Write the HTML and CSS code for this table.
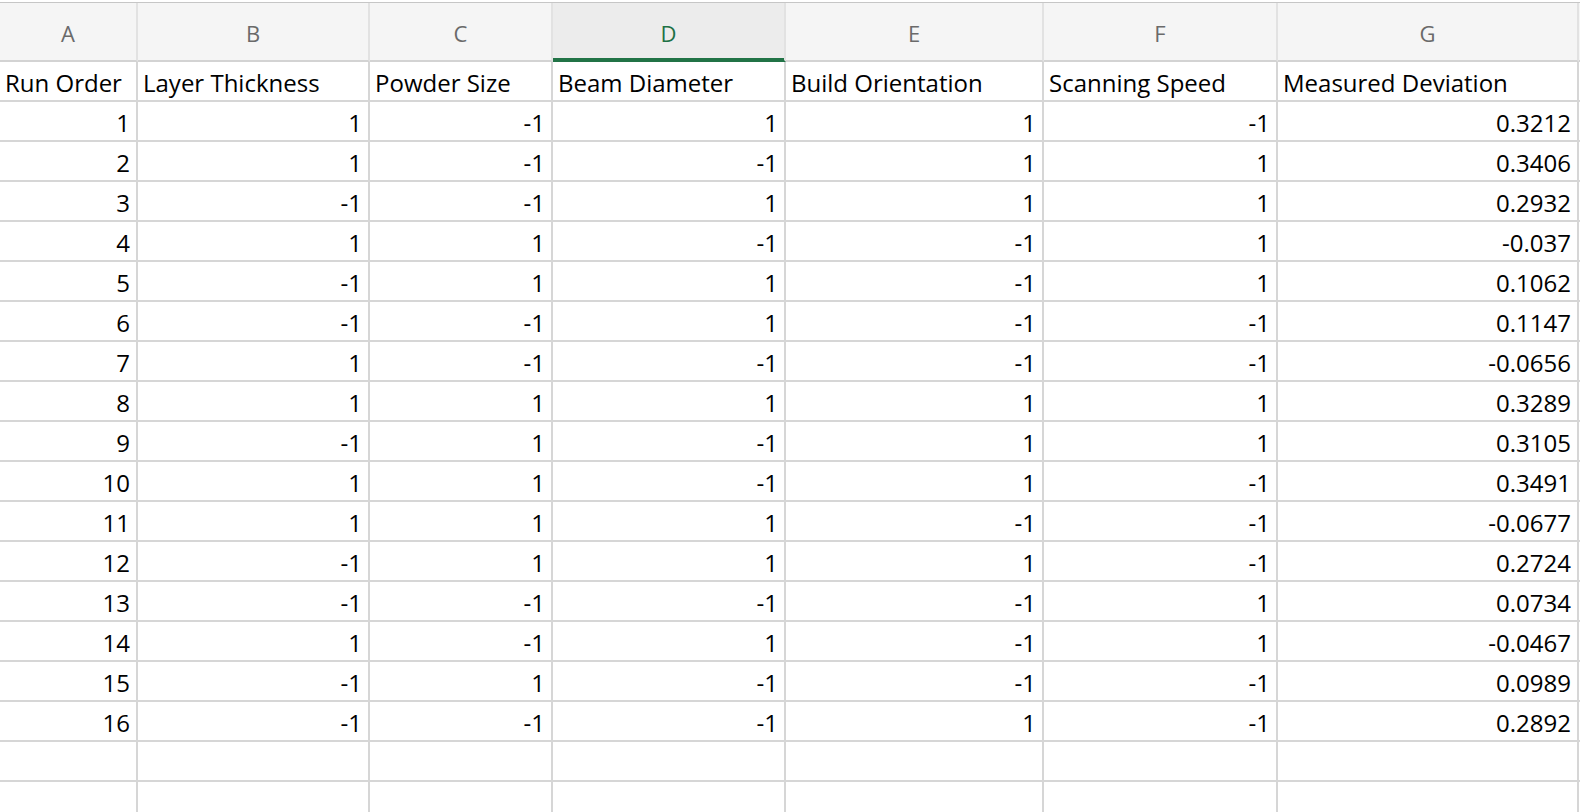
FILE: index.html
```html
<!DOCTYPE html>
<html>
<head>
<meta charset="utf-8">
<link rel="stylesheet" href="styles.css">
</head>
<body>
<div class="sheet">
  <div class="col-head">A</div>
  <div class="col-head">B</div>
  <div class="col-head">C</div>
  <div class="col-head active">D</div>
  <div class="col-head">E</div>
  <div class="col-head">F</div>
  <div class="col-head">G</div>
  <div class="col-head end"></div>

  <div class="cell txt">Run Order</div><div class="cell txt">Layer Thickness</div><div class="cell txt">Powder Size</div><div class="cell txt">Beam Diameter</div><div class="cell txt">Build Orientation</div><div class="cell txt">Scanning Speed</div><div class="cell txt">Measured Deviation</div><div class="cell end"></div>

  <div class="cell">1</div><div class="cell">1</div><div class="cell">-1</div><div class="cell">1</div><div class="cell">1</div><div class="cell">-1</div><div class="cell">0.3212</div><div class="cell end"></div>
  <div class="cell">2</div><div class="cell">1</div><div class="cell">-1</div><div class="cell">-1</div><div class="cell">1</div><div class="cell">1</div><div class="cell">0.3406</div><div class="cell end"></div>
  <div class="cell">3</div><div class="cell">-1</div><div class="cell">-1</div><div class="cell">1</div><div class="cell">1</div><div class="cell">1</div><div class="cell">0.2932</div><div class="cell end"></div>
  <div class="cell">4</div><div class="cell">1</div><div class="cell">1</div><div class="cell">-1</div><div class="cell">-1</div><div class="cell">1</div><div class="cell">-0.037</div><div class="cell end"></div>
  <div class="cell">5</div><div class="cell">-1</div><div class="cell">1</div><div class="cell">1</div><div class="cell">-1</div><div class="cell">1</div><div class="cell">0.1062</div><div class="cell end"></div>
  <div class="cell">6</div><div class="cell">-1</div><div class="cell">-1</div><div class="cell">1</div><div class="cell">-1</div><div class="cell">-1</div><div class="cell">0.1147</div><div class="cell end"></div>
  <div class="cell">7</div><div class="cell">1</div><div class="cell">-1</div><div class="cell">-1</div><div class="cell">-1</div><div class="cell">-1</div><div class="cell">-0.0656</div><div class="cell end"></div>
  <div class="cell">8</div><div class="cell">1</div><div class="cell">1</div><div class="cell">1</div><div class="cell">1</div><div class="cell">1</div><div class="cell">0.3289</div><div class="cell end"></div>
  <div class="cell">9</div><div class="cell">-1</div><div class="cell">1</div><div class="cell">-1</div><div class="cell">1</div><div class="cell">1</div><div class="cell">0.3105</div><div class="cell end"></div>
  <div class="cell">10</div><div class="cell">1</div><div class="cell">1</div><div class="cell">-1</div><div class="cell">1</div><div class="cell">-1</div><div class="cell">0.3491</div><div class="cell end"></div>
  <div class="cell">11</div><div class="cell">1</div><div class="cell">1</div><div class="cell">1</div><div class="cell">-1</div><div class="cell">-1</div><div class="cell">-0.0677</div><div class="cell end"></div>
  <div class="cell">12</div><div class="cell">-1</div><div class="cell">1</div><div class="cell">1</div><div class="cell">1</div><div class="cell">-1</div><div class="cell">0.2724</div><div class="cell end"></div>
  <div class="cell">13</div><div class="cell">-1</div><div class="cell">-1</div><div class="cell">-1</div><div class="cell">-1</div><div class="cell">1</div><div class="cell">0.0734</div><div class="cell end"></div>
  <div class="cell">14</div><div class="cell">1</div><div class="cell">-1</div><div class="cell">1</div><div class="cell">-1</div><div class="cell">1</div><div class="cell">-0.0467</div><div class="cell end"></div>
  <div class="cell">15</div><div class="cell">-1</div><div class="cell">1</div><div class="cell">-1</div><div class="cell">-1</div><div class="cell">-1</div><div class="cell">0.0989</div><div class="cell end"></div>
  <div class="cell">16</div><div class="cell">-1</div><div class="cell">-1</div><div class="cell">-1</div><div class="cell">1</div><div class="cell">-1</div><div class="cell">0.2892</div><div class="cell end"></div>

  <div class="cell"></div><div class="cell"></div><div class="cell"></div><div class="cell"></div><div class="cell"></div><div class="cell"></div><div class="cell"></div><div class="cell end"></div>
  <div class="cell"></div><div class="cell"></div><div class="cell"></div><div class="cell"></div><div class="cell"></div><div class="cell"></div><div class="cell"></div><div class="cell end"></div>
</div>
</body>
</html>
```

FILE: styles.css
```css
html, body {
  margin: 0;
  padding: 0;
  background: #ffffff;
  overflow: hidden;
}

.sheet {
  display: grid;
  grid-template-columns: 138px 232px 183px 233px 258px 234px 301px 1px;
  grid-template-rows: 59px;
  grid-auto-rows: 40px;
  margin-top: 2px;
  border-top: 1px solid #c6c6c6;
  font-family: "Open Sans", "Noto Sans", "Liberation Sans", sans-serif;
  font-size: 24px;
  color: #000000;
}

.col-head {
  box-sizing: border-box;
  background: #f5f5f5;
  border-right: 2px solid #e2e2e2;
  border-bottom: 2px solid #d3d3d3;
  display: flex;
  align-items: center;
  justify-content: center;
  color: #6a6a6a;
  font-size: 22px;
  padding-top: 3px;
}

.col-head.active {
  background: #ececec;
  color: #1e7145;
  border-bottom-color: #217346;
  box-shadow: inset 0 -2px 0 #217346;
}

.col-head.end {
  border-right: none;
}

.cell {
  box-sizing: border-box;
  border-right: 2px solid #d6d6d6;
  border-bottom: 2px solid #d6d6d6;
  display: flex;
  align-items: flex-end;
  justify-content: flex-end;
  padding: 0 6px 5px 5px;
  line-height: 1;
  white-space: nowrap;
  overflow: hidden;
}

.cell.txt {
  justify-content: flex-start;
}

.cell.end {
  border-right: none;
  padding: 0;
}
```
